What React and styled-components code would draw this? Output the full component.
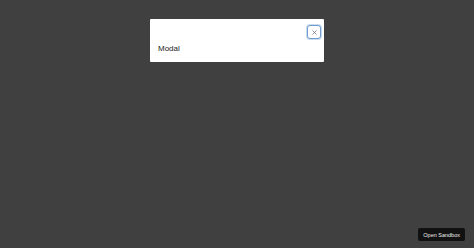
import React from "react";
import styled, { createGlobalStyle } from "styled-components";

const Global = createGlobalStyle`
  html, body {
    margin: 0;
    height: 100%;
    background: #404040;
    font-family: "Liberation Sans", Arial, sans-serif;
  }
  #root {
    height: 100%;
  }
`;

const Page = styled.div`
  position: relative;
  height: 248px;
  display: flex;
  justify-content: center;
  align-items: flex-start;
  padding-top: 19px;
  box-sizing: border-box;
`;

const Dialog = styled.div`
  width: 174px;
  height: 43px;
  background: #fff;
  border-radius: 1px;
  box-sizing: border-box;
  padding: 6px 3px 0 8px;
  display: flex;
  flex-direction: column;
`;

const Header = styled.div`
  display: flex;
  justify-content: flex-end;
`;

const CloseButton = styled.button`
  width: 14px;
  height: 14px;
  padding: 0;
  border: 1px solid #6d9ccf;
  border-radius: 3px;
  background: #fff;
  box-shadow: 0 0 0 1px rgba(109, 156, 207, 0.35);
  display: flex;
  align-items: center;
  justify-content: center;
  cursor: pointer;
`;

const Body = styled.div`
  font-size: 8px;
  color: #222;
  margin-top: 5px;
`;

const SandboxButton = styled.button`
  position: absolute;
  right: 9px;
  bottom: 7px;
  height: 13px;
  padding: 0 5px;
  background: #111;
  color: #eee;
  border: none;
  border-radius: 2px;
  font-family: "Liberation Sans", Arial, sans-serif;
  font-size: 5.5px;
  cursor: pointer;
`;

export default function App() {
  return (
    <>
      <Global />
      <Page>
        <Dialog>
          <Header>
            <CloseButton aria-label="Close">
              <svg width="5" height="5" viewBox="0 0 10 10">
                <path d="M1 1L9 9M9 1L1 9" stroke="#666" strokeWidth="1.4" />
              </svg>
            </CloseButton>
          </Header>
          <Body>Modal</Body>
        </Dialog>
        <SandboxButton>Open Sandbox</SandboxButton>
      </Page>
    </>
  );
}
